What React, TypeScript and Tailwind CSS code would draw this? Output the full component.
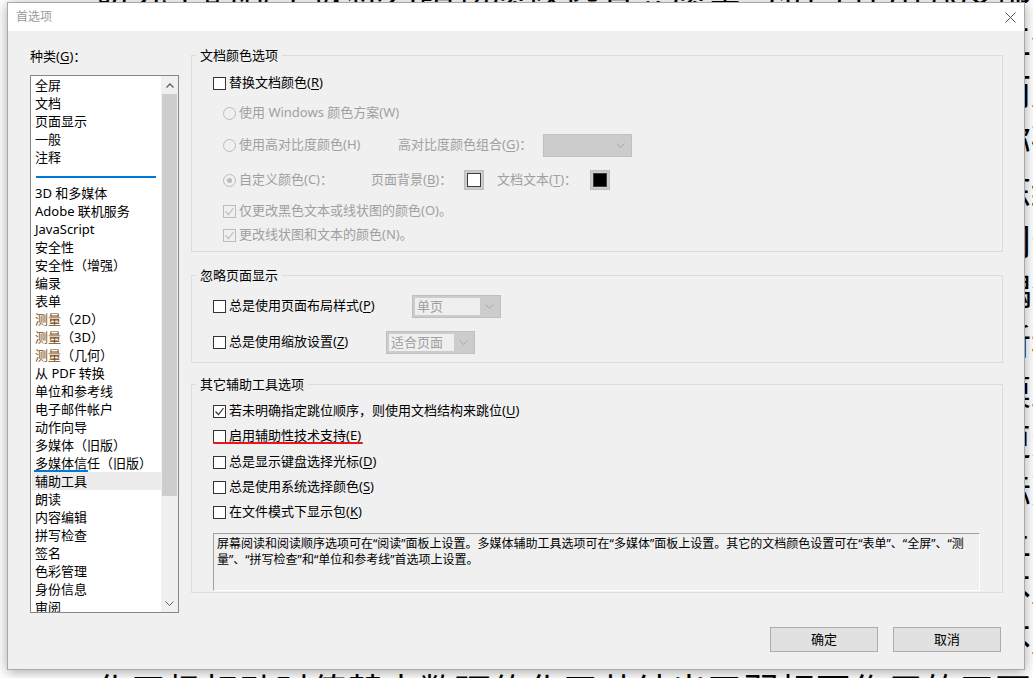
import type { ReactNode } from "react";

const ui = "font-['Noto_Sans','Noto_Sans_CJK_SC',sans-serif]";

const bgLines = [
    "研究中的粒子被称为暗物质候选者其质量与相互作用强度都很弱",
    "因此我们需要在更高的能量下进行这些实验的验证与分析工作中",
    "宇宙早期的温度极高粒子之间频繁地发生碰撞与湮灭过程而产生",
    "在这种条件下物质与反物质的数量几乎完全相等了直到对称破缺",
    "随着宇宙的膨胀温度逐渐下降粒子开始脱离热平衡状态而冻结下",
    "这一过程决定了今天观测到的暗物质的残余丰度值及其空间分布",
    "理论模型预言了多种可能的候选粒子及其相互作用方式与耦合常",
    "实验上通过直接探测间接探测和对撞机三种方法搜寻这类新粒子",
    "目前尚未发现确定的信号但排除了大量的参数空间和理论模型的",
    "未来的探测器将具有更高的灵敏度和更低的本底噪声以及更大的",
    "这将帮助我们理解宇宙中物质的本质和起源的问题并检验标准模",
    "同时也为粒子物理标准模型之外的新物理提供线索和实验上的依",
    "化了极标动时值替本数环传化了共结出了弱相互作用的卫不发生性",
    "化了极标动时值替本数环传化了共结出了弱相互作用的卫不发生性",
    "化了极标动时值替本数环传化了共结出了弱相互作用的卫不发生性",
];

const before = ["全屏", "文档", "页面显示", "一般", "注释"];
const after = [
    "3D 和多媒体",
    "Adobe 联机服务",
    "JavaScript",
    "安全性",
    "安全性（增强）",
    "编录",
    "表单",
    "测量（2D）",
    "测量（3D）",
    "测量（几何）",
    "从 PDF 转换",
    "单位和参考线",
    "电子邮件帐户",
    "动作向导",
    "多媒体（旧版）",
    "多媒体信任（旧版）",
    "辅助工具",
    "朗读",
    "内容编辑",
    "拼写检查",
    "签名",
    "色彩管理",
    "身份信息",
    "审阅",
];

function K({ children }: { children: ReactNode }) {
    return <span className="underline underline-offset-2 decoration-1">{children}</span>;
}

function Check({ on, off }: { on?: boolean; off?: boolean }) {
    return (
        <span
            className={`flex h-[13px] w-[13px] shrink-0 items-center justify-center border ${
                off ? "border-[#bcbcbc] bg-[#f0f0f0]" : "border-[#333333] bg-white"
            }`}
        >
            {on && (
                <svg width="11" height="11" viewBox="0 0 11 11">
                    <path d="M1.5 5.5l3 3 5-6.5" fill="none" stroke={off ? "#bcbcbc" : "#333333"} strokeWidth="1.2" />
                </svg>
            )}
        </span>
    );
}

function Radio({ on }: { on?: boolean }) {
    return (
        <span className="flex h-[13px] w-[13px] shrink-0 items-center justify-center rounded-full border border-[#bcbcbc] bg-[#f0f0f0]">
            {on && <span className="h-[5px] w-[5px] rounded-full bg-[#bcbcbc]" />}
        </span>
    );
}

function Chevron({ color = "#a8a8a8" }: { color?: string }) {
    return (
        <svg width="9" height="5" viewBox="0 0 9 5">
            <path d="M0.5 0.5l4 4 4-4" fill="none" stroke={color} strokeWidth="1" />
        </svg>
    );
}

function Drop({ w, text }: { w: string; text?: string }) {
    return (
        <div className={`flex h-[23px] ${w} items-center border border-[#bfbfbf] bg-[#cccccc] p-[2px]`}>
            <div className={`h-full flex-1 pl-[2px] leading-[17px] text-[#a0a0a0] ${text ? "bg-[#efefef]" : ""}`}>{text}</div>
            <div className="flex w-[18px] justify-center">
                <Chevron />
            </div>
        </div>
    );
}

function Swatch({ fill }: { fill: string }) {
    return (
        <div className="flex h-[20px] w-[20px] items-center justify-center border border-[#bfbfbf] bg-[#cccccc]">
            <div className={`h-[14px] w-[14px] border border-[#3c3c3c] ${fill}`} />
        </div>
    );
}

export default function App() {
    return (
        <div className="relative h-[678px] w-[1033px] overflow-hidden bg-white">
            <div className="mt-[-36px] pl-[95px] font-['Noto_Sans_CJK_SC',sans-serif] text-[36px] leading-[50px] whitespace-nowrap text-black">
                {bgLines.map((l, i) => (
                    <div key={i}>{l}</div>
                ))}
            </div>

            <div
                className={`absolute left-[7px] top-[2px] flex h-[668px] w-[1018px] flex-col border border-[#a9a9a9] bg-[#f0f0f0] text-[13px] text-black shadow-[0_2px_12px_rgba(0,0,0,0.35)] ${ui}`}
            >
                <div className="flex h-[28px] shrink-0 items-center justify-between bg-white pl-[8px] pr-[8px]">
                    <span className="text-[12px] text-[#9a9a9a]">首选项</span>
                    <svg width="11" height="11" viewBox="0 0 11 11">
                        <path d="M0.5 0.5l10 10M10.5 0.5l-10 10" stroke="#555555" strokeWidth="1" />
                    </svg>
                </div>

                <div className="flex items-start gap-[12px] pl-[22px] pt-[15px]">
                    <div className="mt-[1px] w-[149px]">
                        <div className="h-[18px] leading-[18px]">
                            种类(<K>G</K>)：
                        </div>
                        <div className="mt-[10px] flex h-[538px] overflow-hidden border border-[#828790] bg-white">
                            <div className="flex-1 overflow-hidden pl-[1px]">
                                {before.map((t) => (
                                    <div key={t} className="h-[18px] pl-[3px] leading-[18px]">
                                        {t}
                                    </div>
                                ))}
                                <div className="flex h-[18px] items-center pl-[4px]">
                                    <div className="mt-[4px] h-[1.5px] w-[120px] bg-[#0078d7]" />
                                </div>
                                {after.map((t) => (
                                    <div
                                        key={t}
                                        className={`relative h-[18px] pl-[3px] leading-[18px] whitespace-nowrap ${
                                            t === "辅助工具" ? "bg-[#ececec]" : ""
                                        }`}
                                    >
                                        {t.startsWith("测量") ? (
                                            <>
                                                <span className="text-[#7a4a12]">测量</span>
                                                {t.slice(2)}
                                            </>
                                        ) : (
                                            t
                                        )}
                                        {t === "多媒体信任（旧版）" && (
                                            <span className="absolute bottom-[0px] left-[2px] h-[2px] w-[54px] bg-[#0078d7]" />
                                        )}
                                    </div>
                                ))}
                            </div>
                            <div className="flex w-[17px] shrink-0 flex-col bg-[#f0f0f0]">
                                <div className="flex h-[18px] items-center justify-center">
                                    <svg width="8" height="5" viewBox="0 0 8 5">
                                        <path d="M0.5 4.5l3.5-3.5 3.5 3.5" fill="none" stroke="#606060" strokeWidth="1.3" />
                                    </svg>
                                </div>
                                <div className="mx-[1px] h-[402px] bg-[#cdcdcd]" />
                                <div className="flex-1" />
                                <div className="flex h-[18px] items-center justify-center">
                                    <Chevron color="#606060" />
                                </div>
                            </div>
                        </div>
                    </div>

                    <div className="w-[812px]">
                        <fieldset className="border border-[#dcdcdc] pb-[5px] pl-[21px]">
                            <legend className="ml-[-17px] px-[4px] leading-[18px]">文档颜色选项</legend>
                            <div className="mt-[8px] flex h-[22px] items-center gap-[3px]">
                                <Check />
                                <span>
                                    替换文档颜色(<K>R</K>)
                                </span>
                            </div>
                            <div className="ml-[10px] text-[#a0a0a0]">
                                <div className="mt-[8px] flex h-[22px] items-center gap-[3px]">
                                    <Radio />
                                    <span>使用 Windows 颜色方案(W)</span>
                                </div>
                                <div className="mt-[10px] flex h-[22px] items-center gap-[3px]">
                                    <Radio />
                                    <span className="w-[156px]">使用高对比度颜色(H)</span>
                                    <span className="w-[142px]">
                                        高对比度颜色组合(<K>G</K>)：
                                    </span>
                                    <Drop w="w-[89px]" />
                                </div>
                                <div className="mt-[13px] flex h-[22px] items-center gap-[3px]">
                                    <Radio on />
                                    <span className="w-[129px]">自定义颜色(C)：</span>
                                    <span className="w-[90px]">
                                        页面背景(<K>B</K>)：
                                    </span>
                                    <Swatch fill="bg-white" />
                                    <span className="ml-[10px] w-[90px]">
                                        文档文本(<K>T</K>)：
                                    </span>
                                    <Swatch fill="bg-black" />
                                </div>
                                <div className="mt-[9px] flex h-[22px] items-center gap-[3px]">
                                    <Check on off />
                                    <span>仅更改黑色文本或线状图的颜色(O)。</span>
                                </div>
                                <div className="mt-[2px] flex h-[22px] items-center gap-[3px]">
                                    <Check on off />
                                    <span>更改线状图和文本的颜色(N)。</span>
                                </div>
                            </div>
                        </fieldset>

                        <fieldset className="mt-[14px] border border-[#dcdcdc] pb-[9px] pl-[21px]">
                            <legend className="ml-[-17px] px-[4px] leading-[18px]">忽略页面显示</legend>
                            <div className="mt-[11px] flex h-[22px] items-center gap-[3px]">
                                <Check />
                                <span className="w-[180px]">
                                    总是使用页面布局样式(<K>P</K>)
                                </span>
                                <Drop w="w-[89px]" text="单页" />
                            </div>
                            <div className="mt-[14px] flex h-[22px] items-center gap-[3px]">
                                <Check />
                                <span className="w-[154px]">
                                    总是使用缩放设置(<K>Z</K>)
                                </span>
                                <Drop w="w-[89px]" text="适合页面" />
                            </div>
                        </fieldset>

                        <fieldset className="mt-[12px] border border-[#dcdcdc] pb-[1px] pl-[21px]">
                            <legend className="ml-[-17px] px-[4px] leading-[18px]">其它辅助工具选项</legend>
                            <div className="mt-[8px] flex h-[20px] items-center gap-[3px]">
                                <Check on />
                                <span>
                                    若未明确指定跳位顺序，则使用文档结构来跳位(<K>U</K>)
                                </span>
                            </div>
                            <div className="relative mt-[5px] flex h-[20px] items-center gap-[3px]">
                                <Check />
                                <span>
                                    启用辅助性技术支持(<K>E</K>)
                                </span>
                                <span className="absolute left-0 top-[16px] h-[2px] w-[150px] rounded-full bg-[#e8161b]" />
                            </div>
                            <div className="mt-[6px] flex h-[20px] items-center gap-[3px]">
                                <Check />
                                <span>
                                    总是显示键盘选择光标(<K>D</K>)
                                </span>
                            </div>
                            <div className="mt-[5px] flex h-[20px] items-center gap-[3px]">
                                <Check />
                                <span>
                                    总是使用系统选择颜色(<K>S</K>)
                                </span>
                            </div>
                            <div className="mt-[5px] flex h-[20px] items-center gap-[3px]">
                                <Check />
                                <span>
                                    在文件模式下显示包(<K>K</K>)
                                </span>
                            </div>
                            <div className="mt-[11px] h-[58px] w-[767px] border border-t-[#a0a0a0] border-l-[#a0a0a0] border-r-white border-b-white bg-[#f0f0f0] px-[3px] pt-[2px] text-[12px] leading-[16px] whitespace-nowrap">
                                <div>
                                    屏幕阅读和阅读顺序选项可在“阅读”面板上设置。多媒体辅助工具选项可在“多媒体”面板上设置。其它的文档颜色设置可在“表单”、“全屏”、“测
                                </div>
                                <div>量”、“拼写检查”和“单位和参考线”首选项上设置。</div>
                            </div>
                        </fieldset>

                        <div className="mt-[34px] flex justify-end gap-[15px] pr-[2px]">
                            <button className="h-[25px] w-[108px] border border-[#adadad] bg-[#e1e1e1]">确定</button>
                            <button className="h-[25px] w-[108px] border border-[#adadad] bg-[#e1e1e1]">取消</button>
                        </div>
                    </div>
                </div>
            </div>
        </div>
    );
}
